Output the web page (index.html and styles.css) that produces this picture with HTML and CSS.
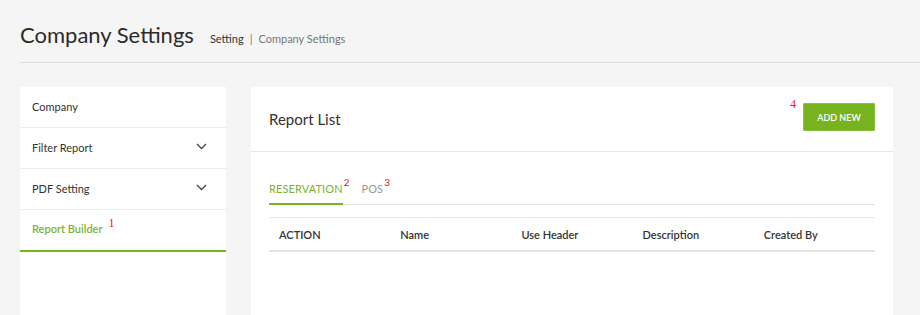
FILE: index.html
```
<!DOCTYPE html>
<html>
<head>
<meta charset="utf-8">
<link rel="stylesheet" href="styles.css">
</head>
<body>
<div class="page">
  <div class="page-head">
    <h1 class="title">Company Settings</h1>
    <div class="crumbs"><span class="crumb-cur">Setting</span><span class="crumb-sep">|</span><span class="crumb-last">Company Settings</span></div>
  </div>
  <div class="content">
    <aside class="side">
      <div class="side-item"><span>Company</span></div>
      <div class="side-item"><span>Filter Report</span>
        <svg class="chev" width="11" height="7" viewBox="0 0 11 7"><path d="M1 1 L5.5 5.5 L10 1" fill="none" stroke="#444" stroke-width="1.3"/></svg>
      </div>
      <div class="side-item"><span>PDF Setting</span>
        <svg class="chev" width="11" height="7" viewBox="0 0 11 7"><path d="M1 1 L5.5 5.5 L10 1" fill="none" stroke="#444" stroke-width="1.3"/></svg>
      </div>
      <div class="side-item active"><span>Report Builder<sup class="mark serif">1</sup></span></div>
    </aside>
    <main class="card">
      <div class="card-head">
        <h2 class="card-title">Report List</h2>
        <div class="head-actions"><sup class="mark serif">4</sup><button class="btn">ADD NEW</button></div>
      </div>
      <div class="card-body">
        <div class="tabs">
          <div class="tab-wrap"><div class="tab active">RESERVATION</div><sup class="mark">2</sup></div>
          <div class="tab-wrap"><div class="tab">POS</div><sup class="mark">3</sup></div>
        </div>
        <table class="tbl">
          <thead>
            <tr><th>ACTION</th><th>Name</th><th>Use Header</th><th>Description</th><th>Created By</th></tr>
          </thead>
        </table>
      </div>
    </main>
  </div>
</div>
</body>
</html>
```
FILE: styles.css
```
html, body {
  margin: 0;
  padding: 0;
  background: #f5f5f5;
  font-family: "Lato", "Noto Sans", sans-serif;
  color: #333;
  height: 100%;
  overflow: hidden;
}
.page {
  padding-left: 20px;
}
.page-head {
  display: flex;
  align-items: baseline;
  padding-top: 22px;
  padding-bottom: 14px;
  border-bottom: 1px solid #dcdcdc;
}
.title {
  margin: 0;
  font-size: 22px;
  font-weight: 400;
  color: #2b2b2b;
  line-height: 26px;
}
.crumbs {
  margin-left: 16px;
  font-size: 11px;
  display: flex;
  gap: 6px;
}
.crumb-cur { color: #333; }
.crumb-sep { color: #777; }
.crumb-last { color: #777; }
.content {
  display: flex;
  gap: 25px;
  margin-top: 24px;
  align-items: flex-start;
}
.side {
  width: 206px;
  background: #fff;
  height: 228px;
}
.side-item {
  height: 40px;
  display: flex;
  align-items: center;
  justify-content: space-between;
  padding: 0 19px 0 12px;
  border-bottom: 1px solid #ececec;
  font-size: 11px;
  color: #333;
}
.side-item span { margin-top: -2px; }
.side-item.active {
  color: #7ab32e;
  font-weight: 600;
  border-bottom: 2px solid #76b31f;
}
.chev { display: block; margin-top: -4px; }
.mark {
  color: #f0141a;
  font-size: 10px;
  font-weight: 400;
  vertical-align: top;
  position: relative;
  top: -5px;
  margin-left: 2px;
}
.mark.serif { font-family: "Liberation Serif", serif; font-size: 12px; }
.side-item .mark { margin-left: 6px; top: -6px; }
.card {
  width: 642px;
  background: #fff;
  height: 228px;
}
.card-head {
  height: 64px;
  display: flex;
  align-items: center;
  justify-content: space-between;
  padding: 0 18px;
  border-bottom: 1px solid #e6e6e6;
}
.card-title {
  margin: 0;
  font-size: 15px;
  font-weight: 400;
  color: #333;
}
.head-actions {
  display: flex;
  align-items: flex-start;
  margin-top: -4px;
}
.head-actions .mark {
  top: -6px;
  margin-right: 7px;
}
.btn {
  width: 72px;
  height: 28px;
  background: #76b31f;
  border: 1px solid #86c23a;
  color: #fff;
  font-family: inherit;
  font-size: 9px;
  font-weight: 600;
  padding: 0;
  border-radius: 1px;
}
.card-body {
  padding: 28px 18px 0 18px;
}
.tabs {
  display: flex;
  gap: 12px;
  border-bottom: 1px solid #e2e2e2;
}
.tab-wrap {
  display: flex;
  align-items: flex-start;
}
.tab {
  font-size: 11px;
  color: #999;
  padding: 2px 0 8px;
  letter-spacing: 0.1px;
}
.tab.active {
  color: #7ab32e;
  border-bottom: 2px solid #76b31f;
  margin-bottom: -1px;
}
.tab-wrap .mark { top: -4px; margin-left: 1px; }
.tbl {
  width: 100%;
  margin-top: 12px;
  border-collapse: collapse;
  table-layout: fixed;
}
.tbl th {
  text-align: left;
  font-size: 11px;
  font-weight: 600;
  color: #333;
  padding: 0 10px;
  height: 32px;
  border-top: 1px solid #e6e6e6;
  border-bottom: 2px solid #e3e3e8;
}
```
